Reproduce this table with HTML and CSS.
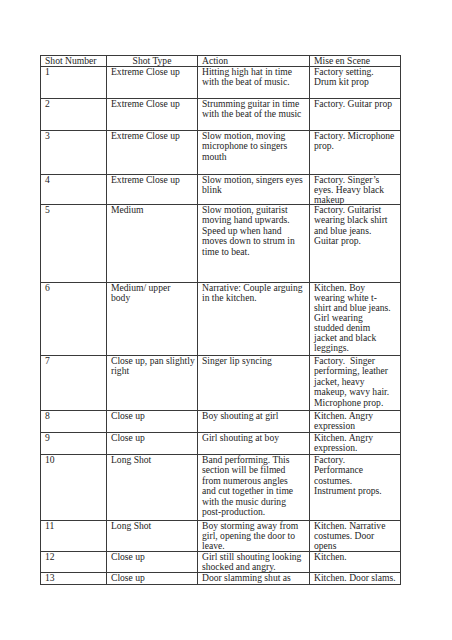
FILE: index.html
```html
<!DOCTYPE html>
<html>
<head>
<meta charset="utf-8">
<link rel="stylesheet" href="styles.css">
</head>
<body>
<div class="sheet">
  <div class="cell">Shot Number</div><div class="cell center">Shot Type</div><div class="cell">Action</div><div class="cell">Mise en Scene</div>

  <div class="cell">1</div><div class="cell">Extreme Close up</div><div class="cell">Hitting high hat in time<br>with the beat of music.</div><div class="cell">Factory setting.<br>Drum kit prop</div>

  <div class="cell">2</div><div class="cell">Extreme Close up</div><div class="cell">Strumming guitar in time<br>with the beat of the music</div><div class="cell">Factory. Guitar prop</div>

  <div class="cell">3</div><div class="cell">Extreme Close up</div><div class="cell">Slow motion, moving<br>microphone to singers<br>mouth</div><div class="cell">Factory. Microphone<br>prop.</div>

  <div class="cell">4</div><div class="cell">Extreme Close up</div><div class="cell">Slow motion, singers eyes<br>blink</div><div class="cell snug">Factory. Singer’s<br>eyes. Heavy black<br>makeup</div>

  <div class="cell">5</div><div class="cell">Medium</div><div class="cell">Slow motion, guitarist<br>moving hand upwards.<br>Speed up when hand<br>moves down to strum in<br>time to beat.</div><div class="cell">Factory. Guitarist<br>wearing black shirt<br>and blue jeans.<br>Guitar prop.</div>

  <div class="cell">6</div><div class="cell">Medium/ upper<br>body</div><div class="cell">Narrative: Couple arguing<br>in the kitchen.</div><div class="cell snug">Kitchen. Boy<br>wearing white t-<br>shirt and blue jeans.<br>Girl wearing<br>studded denim<br>jacket and black<br>leggings.</div>

  <div class="cell">7</div><div class="cell">Close up, pan slightly<br>right</div><div class="cell">Singer lip syncing</div><div class="cell">Factory.&nbsp; Singer<br>performing, leather<br>jacket, heavy<br>makeup, wavy hair.<br>Microphone prop.</div>

  <div class="cell">8</div><div class="cell">Close up</div><div class="cell">Boy shouting at girl</div><div class="cell">Kitchen. Angry<br>expression</div>

  <div class="cell">9</div><div class="cell">Close up</div><div class="cell">Girl shouting at boy</div><div class="cell">Kitchen. Angry<br>expression.</div>

  <div class="cell">10</div><div class="cell">Long Shot</div><div class="cell">Band performing. This<br>section will be filmed<br>from numerous angles<br>and cut together in time<br>with the music during<br>post-production.</div><div class="cell">Factory.<br>Performance<br>costumes.<br>Instrument props.</div>

  <div class="cell">11</div><div class="cell">Long Shot</div><div class="cell snug">Boy storming away from<br>girl, opening the door to<br>leave.</div><div class="cell snug">Kitchen. Narrative<br>costumes. Door<br>opens</div>

  <div class="cell">12</div><div class="cell">Close up</div><div class="cell">Girl still shouting looking<br>shocked and angry.</div><div class="cell">Kitchen.</div>

  <div class="cell">13</div><div class="cell">Close up</div><div class="cell">Door slamming shut as</div><div class="cell">Kitchen. Door slams.</div>
</div>
</body>
</html>
```
FILE: styles.css
```css
html, body {
  margin: 0;
  padding: 0;
  background: #ffffff;
}
body {
  width: 452px;
  height: 640px;
  overflow: hidden;
}
.sheet {
  margin: 55px 0 0 40px;
  width: 360px;
  display: grid;
  grid-template-columns: 66px 91px 112px 91px;
  grid-template-rows: 11px 32px 32px 44px 30px 78px 73px 55px 22px 22px 66px 31px 21px 12px;
  border-top: 1px solid #3a3a3a;
  border-left: 1px solid #3a3a3a;
  font-family: "Liberation Serif", "Times New Roman", serif;
  font-size: 9.6px;
  line-height: 10.4px;
  color: #1e1e1e;
}
.cell {
  box-sizing: border-box;
  border-right: 1px solid #3a3a3a;
  border-bottom: 1px solid #3a3a3a;
  padding: 0 0 0 4px;
  white-space: nowrap;
  overflow: visible;
}
.snug {
  line-height: 10px;
}
.center {
  text-align: center;
  padding-left: 0;
}
```
